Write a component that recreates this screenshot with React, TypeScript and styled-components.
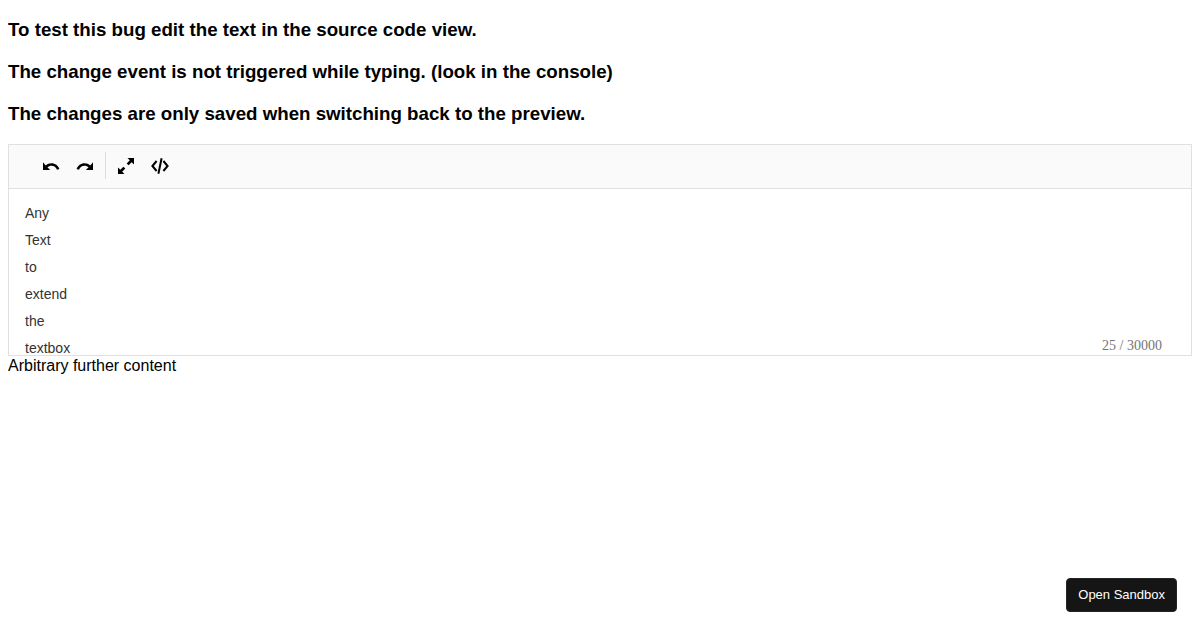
import React from "react";
import styled, { createGlobalStyle } from "styled-components";

const GlobalStyle = createGlobalStyle`
  body {
    margin: 0;
    background: #fff;
    color: #000;
    font-family: "Liberation Sans", Arial, sans-serif;
    font-size: 16px;
    line-height: 20px;
  }
`;

const Page = styled.main`
  padding: 18px 8px 8px;
`;

const Note = styled.h3`
  margin: 0 0 18px;
  line-height: 24px;
`;

const Editor = styled.section`
  position: relative;
  border: 1px solid #e0e0e0;
  background: #fff;
`;

const Toolbar = styled.div`
  box-sizing: border-box;
  display: flex;
  align-items: center;
  height: 44px;
  padding: 0 0 2px 25px;
  border-bottom: 1px solid #e0e0e0;
  background: #fafafa;
`;

const ToolButton = styled.button`
  display: flex;
  align-items: center;
  justify-content: center;
  width: 34px;
  height: 32px;
  padding: 0;
  border: 0;
  background: transparent;
  color: #000;
  cursor: pointer;
`;

const Separator = styled.span`
  width: 1px;
  height: 27px;
  margin: 0 3px;
  background: #dcdcdc;
`;

const Content = styled.div`
  box-sizing: border-box;
  height: 166px;
  padding: 16px 16px 0;
  overflow: hidden;
  outline: none;
  color: #333;
  font-size: 14px;
  line-height: 17px;
`;

const Paragraph = styled.p`
  margin: 0 0 10px;
`;

const CharCount = styled.span`
  position: absolute;
  right: 29px;
  bottom: 1px;
  color: #757575;
  font-family: "Liberation Serif", "Times New Roman", serif;
  font-size: 14px;
  line-height: 16px;
`;

const SandboxButton = styled.button`
  position: fixed;
  right: 23px;
  bottom: 18px;
  height: 34px;
  padding: 0 11px 2px;
  border: 1px solid #252525;
  border-radius: 4px;
  background: #151515;
  color: #fff;
  font-family: "Liberation Sans", Arial, sans-serif;
  font-size: 13px;
  cursor: pointer;
`;

const Icon = ({ children }: { children: React.ReactNode }) => (
  <svg width="18" height="18" viewBox="0 0 18 18" aria-hidden="true">
    {children}
  </svg>
);

const UndoPath = () => (
  <path
    d="M1 5.3V13H8.2L5.4 10.3C6.5 9.3 7.9 8.7 9.5 8.7C12 8.7 14.2 10.3 15 12.8L17.4 12C16.3 8.6 13.1 6.2 9.5 6.2C7.3 6.2 5.3 7.1 3.7 8.4Z"
    fill="currentColor"
  />
);

const notes = [
  "To test this bug edit the text in the source code view.",
  "The change event is not triggered while typing. (look in the console)",
  "The changes are only saved when switching back to the preview.",
];

const lines = ["Any", "Text", "to", "extend", "the", "textbox"];

export default function App() {
  return (
    <>
      <GlobalStyle />
      <Page>
        {notes.map((note) => (
          <Note key={note}>{note}</Note>
        ))}
        <Editor>
          <Toolbar role="toolbar" aria-label="Formatting">
            <ToolButton aria-label="Undo">
              <Icon>
                <UndoPath />
              </Icon>
            </ToolButton>
            <ToolButton aria-label="Redo">
              <Icon>
                <g transform="matrix(-1 0 0 1 18 0)">
                  <UndoPath />
                </g>
              </Icon>
            </ToolButton>
            <Separator />
            <ToolButton aria-label="Maximize">
              <Icon>
                <path
                  d="M10.5 1H17V7.5L14.7 5.2L11.6 8.3L9.7 6.4L12.8 3.3ZM7.5 17H1V10.5L3.3 12.8L6.4 9.7L8.3 11.6L5.2 14.7Z"
                  fill="currentColor"
                />
              </Icon>
            </ToolButton>
            <ToolButton aria-label="Code view">
              <Icon>
                <path
                  d="M5.6 4L1.4 9L5.6 14M12.4 4L16.6 9L12.4 14M10.6 1.2L7.4 16.8"
                  fill="none"
                  stroke="currentColor"
                  strokeWidth="2"
                />
              </Icon>
            </ToolButton>
          </Toolbar>
          <Content
            contentEditable
            suppressContentEditableWarning
            role="textbox"
            aria-label="Editor content"
          >
            {lines.map((line) => (
              <Paragraph key={line}>{line}</Paragraph>
            ))}
          </Content>
          <CharCount>25 / 30000</CharCount>
        </Editor>
        <div>Arbitrary further content</div>
      </Page>
      <SandboxButton>Open Sandbox</SandboxButton>
    </>
  );
}
